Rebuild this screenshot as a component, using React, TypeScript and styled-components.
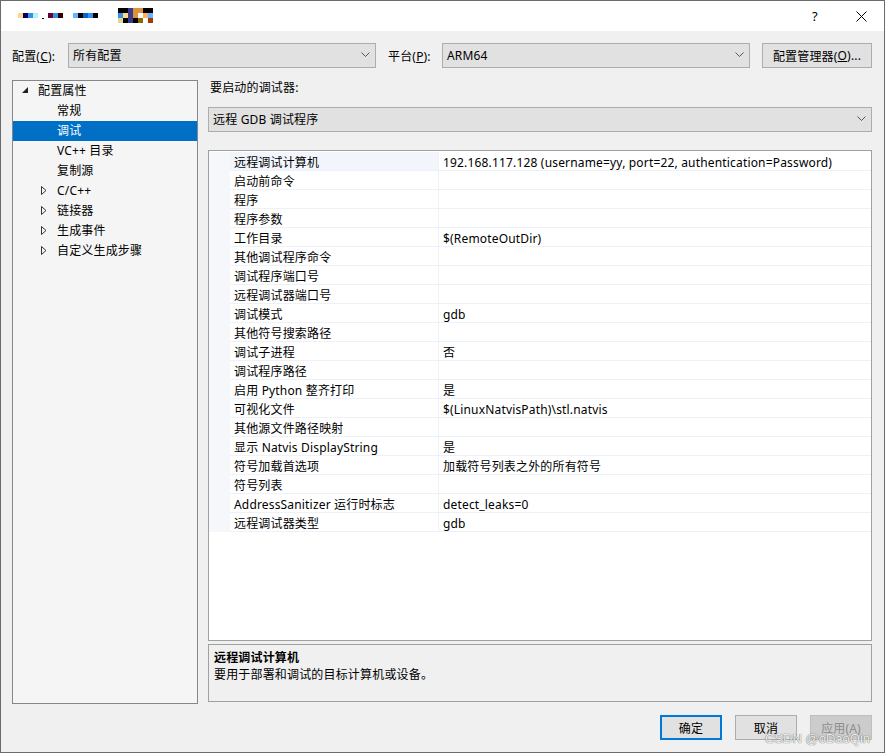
import React from 'react';
import styled, { createGlobalStyle } from 'styled-components';

const GlobalStyle = createGlobalStyle`
  html, body {
    margin: 0;
    padding: 0;
    background: #f0f0f0;
  }
  * {
    box-sizing: border-box;
  }
`;

const font = `"Noto Sans", "Noto Sans CJK SC", sans-serif`;

const Window = styled.div`
  width: 885px;
  height: 753px;
  border: 1px solid #6b6b6b;
  background: #f0f0f0;
  font-family: ${font};
  font-size: 12px;
  letter-spacing: 0.17px;
  color: #000;
  display: flex;
  flex-direction: column;
  overflow: hidden;
`;

const TitleBar = styled.div`
  height: 30px;
  background: #fff;
  display: flex;
  align-items: center;
  padding-left: 17px;
`;

const TitleButtons = styled.div`
  margin-left: auto;
  display: flex;
  align-items: center;
  height: 100%;
`;

const TitleButton = styled.div`
  width: 46px;
  height: 100%;
  display: flex;
  align-items: center;
  justify-content: center;
  font-size: 13px;
  color: #000;
`;

const Content = styled.div`
  flex: 1;
  display: flex;
  flex-direction: column;
  padding: 12px 12px 0 11px;
`;

const TopRow = styled.div`
  display: flex;
  align-items: center;
  height: 25px;
`;

const Label = styled.span<{ width?: number }>`
  width: ${({ width }) => (width ? `${width}px` : 'auto')};
  white-space: nowrap;
`;

const Combo = styled.div<{ width: number }>`
  width: ${({ width }) => width}px;
  height: 25px;
  background: #e1e1e1;
  border: 1px solid #adadad;
  display: flex;
  align-items: center;
  padding: 0 0 1px 4px;
  white-space: nowrap;
`;

const ComboText = styled.span`
  flex: 1;
`;

const Chevron = styled.span`
  width: 20px;
  display: flex;
  justify-content: center;
  align-items: center;
`;

const Button = styled.div<{ width: number; primary?: boolean; disabled?: boolean }>`
  width: ${({ width }) => width}px;
  height: 25px;
  background: ${({ disabled }) => (disabled ? '#cccccc' : '#e1e1e1')};
  border: ${({ primary }) => (primary ? '2px solid' : '1px solid')};
  border-color: ${({ disabled, primary }) => (disabled ? '#bfbfbf' : primary ? '#0078d7' : '#adadad')};
  color: ${({ disabled }) => (disabled ? '#8d8d8d' : '#000')};
  display: flex;
  align-items: center;
  justify-content: center;
  white-space: nowrap;
`;

const Main = styled.div`
  display: flex;
  gap: 10px;
  margin-top: 12px;
  height: 624px;
`;

const Tree = styled.div`
  width: 187px;
  background: #f5f5f5;
  border: 1px solid #828790;
`;

const TreeRow = styled.div<{ depth: number; selected?: boolean }>`
  height: 20px;
  display: flex;
  align-items: center;
  padding-bottom: 2px;
  background: ${({ selected }) => (selected ? '#0070c6' : 'transparent')};
  color: ${({ selected }) => (selected ? '#fff' : '#000')};
  padding-left: ${({ depth }) => (depth === 0 ? 9 : 28)}px;
`;

const Arrow = styled.span`
  width: 16px;
  display: flex;
  align-items: center;
`;

const Right = styled.div`
  flex: 1;
  display: flex;
  flex-direction: column;
`;

const SectionLabel = styled.div`
  height: 18px;
  line-height: 15px;
  padding-left: 2px;
`;

const Grid = styled.div`
  margin-top: 18px;
  height: 491px;
  background: #fff;
  border: 1px solid #a0a0a0;
  padding-top: 1px;
`;

const PropRow = styled.div`
  display: flex;
  height: 19px;
`;

const Margin = styled.div`
  width: 21px;
  background: #f5f7fb;
`;

const Cell = styled.div<{ width?: number; active?: boolean }>`
  width: ${({ width }) => (width ? `${width}px` : 'auto')};
  flex: ${({ width }) => (width ? 'none' : 1)};
  background: ${({ active }) => (active ? '#f2f6fc' : '#fff')};
  border-bottom: 1px solid #eef2f8;
  border-right: ${({ width }) => (width ? '1px solid #eef2f8' : 'none')};
  display: flex;
  align-items: center;
  padding: 2px 0 0 4px;
  white-space: nowrap;
  overflow: hidden;
`;

const Description = styled.div`
  margin-top: 3px;
  height: 58px;
  border: 1px solid #a0a0a0;
  padding: 4px 5px 0;
  line-height: 17px;
`;

const DescTitle = styled.div`
  font-weight: bold;
`;

const Footer = styled.div`
  display: flex;
  justify-content: flex-end;
  gap: 13px;
  margin-top: 11px;
  position: relative;
`;

const Watermark = styled.span`
  position: absolute;
  right: 2px;
  top: 16px;
  font-family: "Liberation Sans", Arial, sans-serif;
  font-size: 13px;
  letter-spacing: 0;
  color: rgba(255, 255, 255, 0.9);
  text-shadow: 0 0 1px rgba(90, 90, 90, 0.9), 0 0 1px rgba(90, 90, 90, 0.6);
  pointer-events: none;
`;

const Mosaic = () => {
  const cells: [number, string][] = [
    [0, '#ffd890'], [5, '#000066'], [10, '#3a8ee6'], [15, '#b0f0ff'],
    [30, '#660033'], [35, '#3a8ee6'], [40, '#330000'],
    [55, '#66b3ff'], [60, '#000'], [65, '#0066cc'], [70, '#3a8ee6'], [75, '#000'],
  ];
  const big: string[][] = [
    ['#000', '#000', '#3a3a8a', '#e0903a', '#e0903a', '#000', '#000'],
    ['#3a8ee6', '#ffd890', '#3a3a8a', '#e0903a', '#fff', '#ffb060', '#66b3ff'],
    ['#d8d890', '#000', '#3a3a8a', '#000', '#8a6a00', '#fff', '#a04000'],
  ];
  return (
    <svg width="140" height="16" viewBox="0 0 140 16">
      {cells.map(([x, c], i) => (
        <rect key={i} x={x} y={5} width={5} height={5} fill={c} />
      ))}
      <rect x={24} y={10} width={2} height={1} fill="#000" />
      {big.map((row, r) =>
        row.map((c, ci) => <rect key={`${r}-${ci}`} x={100 + ci * 5} y={r * 5} width={5} height={5} fill={c} />)
      )}
    </svg>
  );
};

const ChevronIcon = () => (
  <svg width="9" height="6" viewBox="0 0 9 6">
    <path d="M0.5 0.5 L4.5 4.5 L8.5 0.5" fill="none" stroke="#555" strokeWidth="1" />
  </svg>
);

const ExpandedArrow = () => (
  <svg width="7" height="7" viewBox="0 0 7 7">
    <path d="M6 0 L6 6 L0 6 Z" fill="#222" />
  </svg>
);

const CollapsedArrow = () => (
  <svg width="6" height="9" viewBox="0 0 6 9">
    <path d="M0.5 0.5 L5 4.5 L0.5 8.5 Z" fill="none" stroke="#333" strokeWidth="1" />
  </svg>
);

interface TreeItem {
  label: string;
  depth: number;
  expandable?: boolean;
  expanded?: boolean;
  selected?: boolean;
}

const treeItems: TreeItem[] = [
  { label: '配置属性', depth: 0, expandable: true, expanded: true },
  { label: '常规', depth: 1 },
  { label: '调试', depth: 1, selected: true },
  { label: 'VC++ 目录', depth: 1 },
  { label: '复制源', depth: 1 },
  { label: 'C/C++', depth: 1, expandable: true },
  { label: '链接器', depth: 1, expandable: true },
  { label: '生成事件', depth: 1, expandable: true },
  { label: '自定义生成步骤', depth: 1, expandable: true },
];

const properties: [string, string][] = [
  ['远程调试计算机', '192.168.117.128 (username=yy, port=22, authentication=Password)'],
  ['启动前命令', ''],
  ['程序', ''],
  ['程序参数', ''],
  ['工作目录', '$(RemoteOutDir)'],
  ['其他调试程序命令', ''],
  ['调试程序端口号', ''],
  ['远程调试器端口号', ''],
  ['调试模式', 'gdb'],
  ['其他符号搜索路径', ''],
  ['调试子进程', '否'],
  ['调试程序路径', ''],
  ['启用 Python 整齐打印', '是'],
  ['可视化文件', '$(LinuxNatvisPath)\\stl.natvis'],
  ['其他源文件路径映射', ''],
  ['显示 Natvis DisplayString', '是'],
  ['符号加载首选项', '加载符号列表之外的所有符号'],
  ['符号列表', ''],
  ['AddressSanitizer 运行时标志', 'detect_leaks=0'],
  ['远程调试器类型', 'gdb'],
];

function App(): JSX.Element {
  return (
    <>
      <GlobalStyle />
      <Window>
        <TitleBar>
          <Mosaic />
          <TitleButtons>
            <TitleButton>?</TitleButton>
            <TitleButton>
              <svg width="11" height="11" viewBox="0 0 11 11">
                <path d="M0.5 0.5 L10.5 10.5 M10.5 0.5 L0.5 10.5" stroke="#000" strokeWidth="1" />
              </svg>
            </TitleButton>
          </TitleButtons>
        </TitleBar>
        <Content>
          <TopRow>
            <Label width={56}>配置(<u>C</u>):</Label>
            <Combo width={308}>
              <ComboText>所有配置</ComboText>
              <Chevron>
                <ChevronIcon />
              </Chevron>
            </Combo>
            <Label width={54} style={{ marginLeft: 12 }}>
              平台(<u>P</u>):
            </Label>
            <Combo width={308}>
              <ComboText>ARM64</ComboText>
              <Chevron>
                <ChevronIcon />
              </Chevron>
            </Combo>
            <Button width={110} style={{ marginLeft: 'auto' }}>
              配置管理器(<u>O</u>)...
            </Button>
          </TopRow>
          <Main>
            <Tree>
              {treeItems.map((item) => (
                <TreeRow key={item.label} depth={item.depth} selected={item.selected}>
                  <Arrow>
                    {item.expandable ? item.expanded ? <ExpandedArrow /> : <CollapsedArrow /> : null}
                  </Arrow>
                  {item.label}
                </TreeRow>
              ))}
            </Tree>
            <Right>
              <SectionLabel>要启动的调试器:</SectionLabel>
              <Combo width={664} style={{ marginTop: 9 }}>
                <ComboText>远程 GDB 调试程序</ComboText>
                <Chevron>
                  <ChevronIcon />
                </Chevron>
              </Combo>
              <Grid>
                {properties.map(([name, value], i) => (
                  <PropRow key={name}>
                    <Margin />
                    <Cell width={209} active={i === 0}>
                      {name}
                    </Cell>
                    <Cell>{value}</Cell>
                  </PropRow>
                ))}
              </Grid>
              <Description>
                <DescTitle>远程调试计算机</DescTitle>
                <div>要用于部署和调试的目标计算机或设备。</div>
              </Description>
            </Right>
          </Main>
          <Footer>
            <Button width={62} primary>
              确定
            </Button>
            <Button width={62}>取消</Button>
            <Button width={62} disabled>
              应用(A)
            </Button>
            <Watermark>CSDN @oDaoQin</Watermark>
          </Footer>
        </Content>
      </Window>
    </>
  );
}

export default App;
